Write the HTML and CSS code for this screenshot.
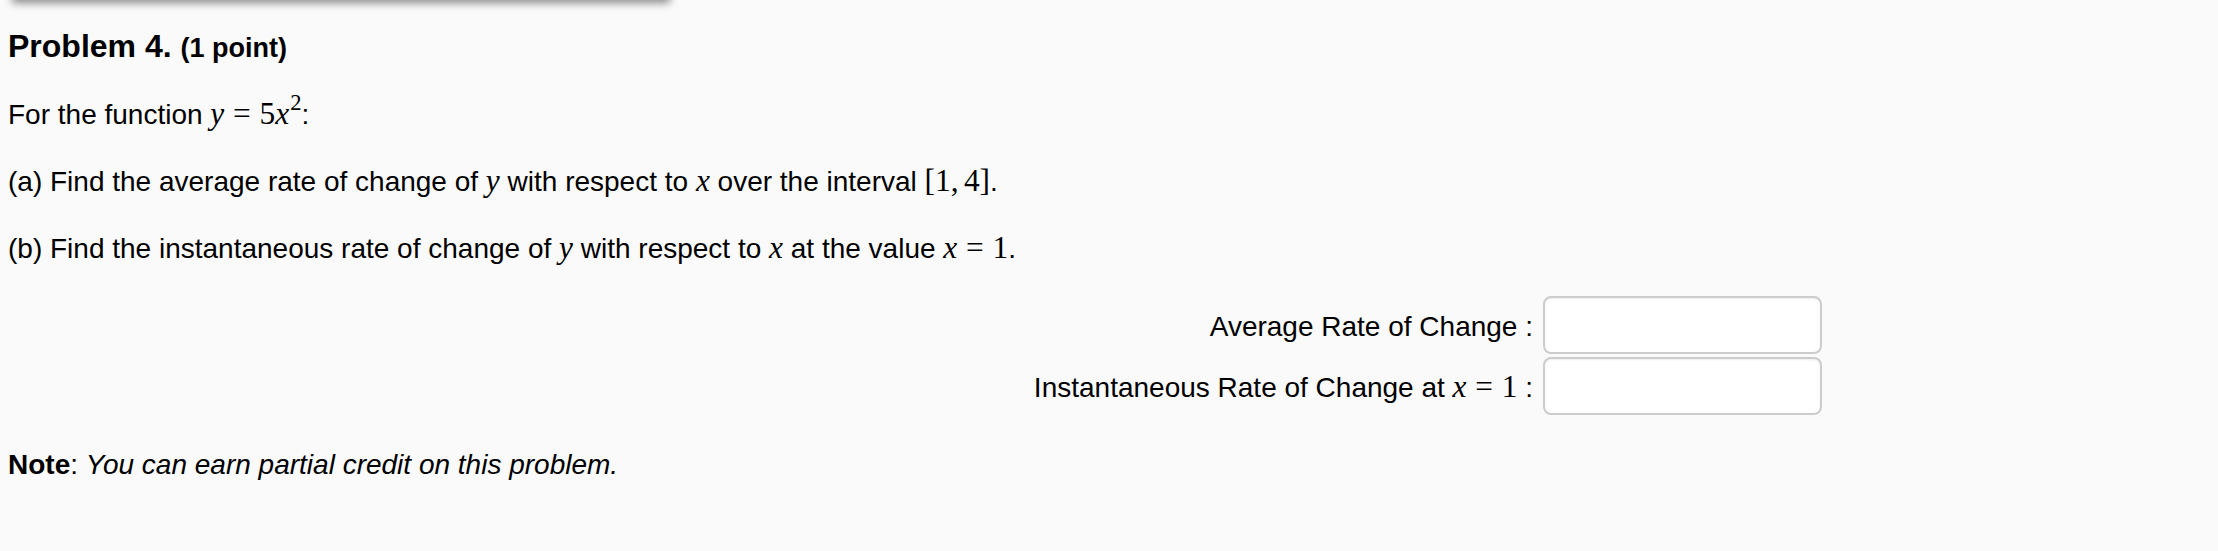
FILE: index.html
```html
<!DOCTYPE html>
<html>
<head>
<meta charset="utf-8">
<link rel="stylesheet" href="styles.css">
</head>
<body>
<div class="topbar"></div>
<div class="problem">
  <h3 class="title">Problem 4. <span class="pts">(1 point)</span></h3>
  <p class="para">For the function <span class="m"><i>y</i><span class="rel">=</span>5<i>x</i><sup>2</sup></span>:</p>
  <p class="para">(a) Find the average rate of change of <span class="m"><i>y</i></span> with respect to <span class="m"><i>x</i></span> over the interval <span class="m">[1,<span class="thin"></span>4]</span>.</p>
  <p class="para">(b) Find the instantaneous rate of change of <span class="m"><i>y</i></span> with respect to <span class="m"><i>x</i></span> at the value <span class="m"><i>x</i><span class="rel">=</span>1</span>.</p>
  <div class="answers">
    <label class="lbl">Average Rate of Change :</label>
    <input class="ans" type="text">
    <label class="lbl">Instantaneous Rate of Change at <span class="m"><i>x</i><span class="rel">=</span>1</span> :</label>
    <input class="ans" type="text">
  </div>
  <p class="para note"><b>Note</b>: <i>You can earn partial credit on this problem.</i></p>
</div>
</body>
</html>
```
FILE: styles.css
```css
html, body {
  margin: 0;
  padding: 0;
  background: #fafafa;
}
body {
  font-family: "Liberation Sans", Arial, Helvetica, sans-serif;
  font-size: 28px;
  color: #000;
  overflow: hidden;
}
.topbar {
  height: 12px;
  margin-top: -12px;
  margin-left: 12px;
  width: 658px;
  background: #fafafa;
  box-shadow: 0 3px 8px rgba(0, 0, 0, 0.45);
}
.problem {
  width: 1822px;
  padding-left: 8px;
  box-sizing: border-box;
}
.title {
  margin: 26px 0 0 0;
  font-size: 32px;
  line-height: 40px;
  font-weight: bold;
}
.pts {
  font-size: 27px;
}
.para {
  margin: 27px 0 0 0;
  line-height: 40px;
}
.m {
  font-family: "Liberation Serif", "Times New Roman", serif;
  font-size: 1.12em;
  line-height: 1;
}
.m i {
  font-style: italic;
}
.rel {
  display: inline-block;
  margin: 0 0.28em;
}
.thin {
  display: inline-block;
  width: 0.17em;
}
.m sup {
  font-size: 0.72em;
  line-height: 0;
  vertical-align: 0.62em;
  margin-left: 0.05em;
}
.answers {
  display: grid;
  grid-template-columns: auto 279px;
  justify-content: end;
  align-items: center;
  column-gap: 10px;
  row-gap: 3px;
  margin-top: 27px;
}
.lbl {
  text-align: right;
  line-height: 40px;
  padding-top: 4px;
}
.ans {
  box-sizing: border-box;
  width: 279px;
  height: 58px;
  border: 2px solid #cccccc;
  border-radius: 8px;
  background: #ffffff;
  box-shadow: inset 0 1px 2px rgba(0, 0, 0, 0.08);
  margin: 0;
  padding: 4px 8px;
  font-size: 28px;
}
.note {
  margin-top: 30px;
}
.note i {
  font-style: italic;
}
```
